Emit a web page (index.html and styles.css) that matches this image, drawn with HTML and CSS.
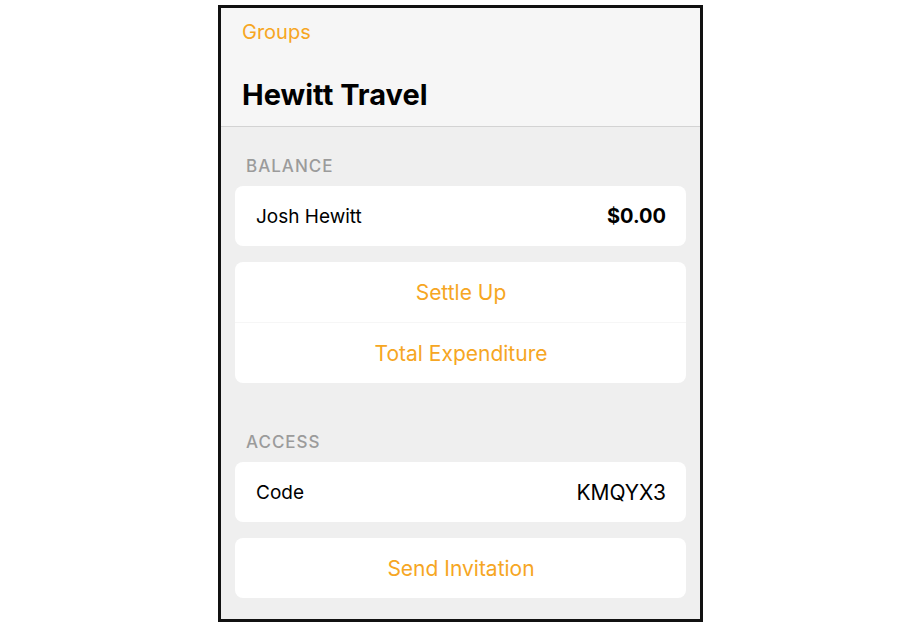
FILE: index.html
```html
<!DOCTYPE html>
<html lang="en">
<head>
    <meta charset="UTF-8">
    <meta name="viewport" content="width=device-width, initial-scale=1.0">
    <title>Hewitt Travel</title>
    <link rel="stylesheet" href="styles.css">
</head>
<body>

    <div class="phone">
        <div class="nav">
            <div class="back">Groups</div>
            <h1 class="title">Hewitt Travel</h1>
        </div>

        <div class="content">
            <div class="section-label">Balance</div>
            <div class="card">
                <div class="row">
                    <span class="name">Josh Hewitt</span>
                    <span class="amount">$0.00</span>
                </div>
            </div>

            <div class="card">
                <div class="row action">Settle Up</div>
                <div class="row action">Total Expenditure</div>
            </div>

            <div class="section-label access">Access</div>
            <div class="card">
                <div class="row">
                    <span class="name">Code</span>
                    <span class="code">KMQYX3</span>
                </div>
            </div>

            <div class="card">
                <div class="row action">Send Invitation</div>
            </div>
        </div>
    </div>

</body>
</html>
```

FILE: styles.css
```css
body{
    margin: 0;
    padding: 0;
    background: #fff;
    font-family: Inter, "Liberation Sans", Arial, sans-serif;
}

.phone{
    margin: 5px 0 0 218px;
    width: 479px;
    height: 611px;
    border: 3px solid #111;
    background: #efefef;
    display: flex;
    flex-direction: column;
}

.nav{
    height: 119px;
    background: #f6f6f6;
    border-bottom: 1px solid #d3d3d3;
    padding: 12px 0 0 21px;
    box-sizing: border-box;
}

.back{
    color: #f6a623;
    font-size: 20px;
    line-height: 24px;
}

.title{
    margin: 33px 0 0 0;
    font-size: 29px;
    line-height: 36px;
    font-weight: 700;
    color: #000;
}

.content{
    padding: 0 14px;
}

.section-label{
    margin: 29px 0 10px 11px;
    font-size: 17px;
    line-height: 20px;
    font-weight: 500;
    letter-spacing: 1px;
    text-transform: uppercase;
    color: #9b9b9b;
}

.section-label.access{
    margin-top: 49px;
}

.card{
    background: #fff;
    border-radius: 8px;
    margin-bottom: 16px;
}

.row{
    height: 60px;
    padding: 0 20px 0 21px;
    display: flex;
    align-items: center;
    justify-content: space-between;
    font-size: 19px;
    color: #000;
}

.row + .row{
    border-top: 1px solid #f6f6f6;
    height: 60px;
}

.action{
    justify-content: center;
    color: #f6a623;
    font-size: 21px;
}

.amount{
    font-weight: 700;
    font-size: 20px;
}

.code{
    font-size: 21px;
}
```
